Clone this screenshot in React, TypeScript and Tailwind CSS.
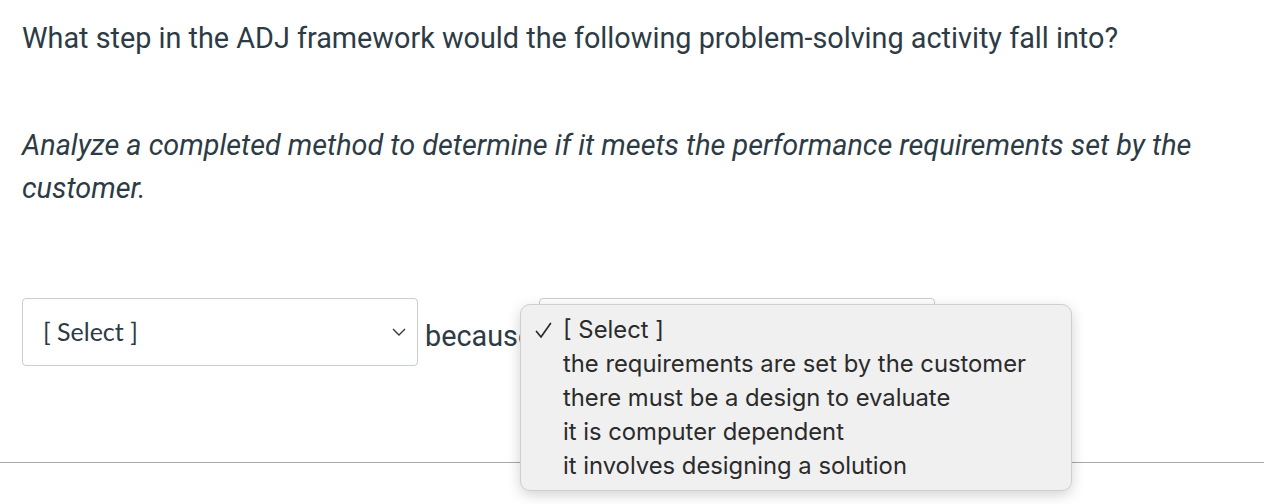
import React from "react";

const options = [
  "[ Select ]",
  "the requirements are set by the customer",
  "there must be a design to evaluate",
  "it is computer dependent",
  "it involves designing a solution",
];

function Chevron() {
  return (
    <svg width="16" height="10" viewBox="0 0 16 10" fill="none" stroke="#2d3b45" strokeWidth="1.4">
      <path d="M2 2 L8 8 L14 2" />
    </svg>
  );
}

function Check() {
  return (
    <svg width="17" height="17" viewBox="0 0 17 17" fill="none" stroke="#2b2b2b" strokeWidth="1.7" strokeLinecap="round" strokeLinejoin="round">
      <path d="M1.5 9.5 L6 15 L15.5 1.5" />
    </svg>
  );
}

export default function App() {
  return (
    <div className="w-[1264px] h-[504px] bg-white overflow-hidden text-[#2d3b45]" style={{ fontFamily: "Roboto, sans-serif" }}>
      <div className="pl-[22px] pt-[18px]">
        <p className="text-[28.8px] leading-[40px]">
          What step in the ADJ framework would the following problem-solving activity fall into?
        </p>
        <p className="mt-[66px] text-[28.8px] leading-[43px] italic w-[1220px]">
          Analyze a completed method to determine if it meets the performance requirements set by the customer.
        </p>
        <div className="relative mt-[88px] flex items-center h-[68px]">
          <div className="w-[396px] h-[68px] border border-[#c7cdd1] rounded-[4px] flex items-center justify-between pl-[20px] pr-[10px]">
            <span className="text-[25px]" style={{ fontFamily: "Lato, sans-serif" }}>[ Select ]</span>
            <Chevron />
          </div>
          <span className="ml-[7px] text-[28.8px] mt-[10px]">because</span>
          <div className="ml-[6px] w-[396px] h-[68px] border border-[#c7cdd1] rounded-[4px]" />
          <div
            className="absolute left-[498px] top-[6px] w-[552px] h-[187px] bg-[#f0f0f0] rounded-[10px] border border-[#cfcfcf] shadow-[0_4px_14px_rgba(0,0,0,0.18)] pt-[8px] text-[#2b2b2b] z-10"
            style={{ fontFamily: "Inter, sans-serif" }}
          >
            {options.map((o, i) => (
              <div key={o} className="flex items-center h-[34px] text-[23.8px]">
                <span className="w-[42px] pl-[14px] flex items-center">{i === 0 ? <Check /> : null}</span>
                <span>{o}</span>
              </div>
            ))}
          </div>
        </div>
      </div>
      <div className="mt-[96px] h-px bg-[#a8a8a8]" />
    </div>
  );
}
